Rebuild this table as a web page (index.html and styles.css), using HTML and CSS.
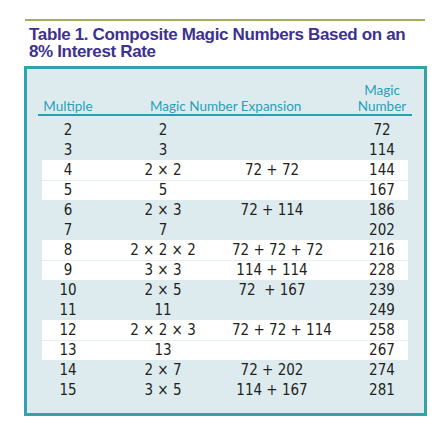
FILE: index.html
```html
<!DOCTYPE html>
<html>
<head>
<meta charset="utf-8">
<link rel="stylesheet" href="styles.css">
</head>
<body>
<div class="rule"></div>
<h1 class="title">Table 1. Composite Magic Numbers Based on an<br>8% Interest Rate</h1>
<div class="box">
  <div class="head">
    <div class="h1c">Multiple</div>
    <div class="h2c">Magic Number Expansion</div>
    <div class="h4c">Magic<br>Number</div>
  </div>
  <div class="rows">
    <div class="row"><span>2</span><span>2</span><span></span><span></span><span>72</span></div>
    <div class="row"><span>3</span><span>3</span><span></span><span></span><span>114</span></div>
    <div class="row w"><span>4</span><span>2 × 2</span><span>72 + 72</span><span></span><span>144</span></div>
    <div class="row w w2"><span>5</span><span>5</span><span></span><span></span><span>167</span></div>
    <div class="row"><span>6</span><span>2 × 3</span><span>72 + 114</span><span></span><span>186</span></div>
    <div class="row"><span>7</span><span>7</span><span></span><span></span><span>202</span></div>
    <div class="row w"><span>8</span><span>2 × 2 × 2</span><span>72 + 72 + 72</span><span></span><span>216</span></div>
    <div class="row w w2"><span>9</span><span>3 × 3</span><span>114 + 114</span><span></span><span>228</span></div>
    <div class="row"><span>10</span><span>2 × 5</span><span>72&nbsp; + 167</span><span></span><span>239</span></div>
    <div class="row"><span>11</span><span>11</span><span></span><span></span><span>249</span></div>
    <div class="row w"><span>12</span><span>2 × 2 × 3</span><span>72 + 72 + 114</span><span></span><span>258</span></div>
    <div class="row w w2"><span>13</span><span>13</span><span></span><span></span><span>267</span></div>
    <div class="row"><span>14</span><span>2 × 7</span><span>72 + 202</span><span></span><span>274</span></div>
    <div class="row"><span>15</span><span>3 × 5</span><span>114 + 167</span><span></span><span>281</span></div>
  </div>
</div>
</body>
</html>
```
FILE: styles.css
```css
html, body { margin: 0; padding: 0; background: #fff; }
body { font-family: "Liberation Sans", Arial, sans-serif; }
.rule { margin: 19px 0 0 25px; width: 400px; height: 2px; background: #a4ab5e; }
.title {
  margin: 5px 0 0 29px;
  font-family: "Liberation Sans", Arial, sans-serif;
  font-weight: bold;
  font-size: 17px;
  letter-spacing: -0.35px;
  line-height: 17px;
  color: #3d3190;
  white-space: nowrap;
}
.box {
  margin: 6px 0 0 24px;
  width: 403px;
  height: 350px;
  box-sizing: border-box;
  border: 3px solid #33a2ab;
  background: #ddebef;
  padding-top: 13px;
}
.head {
  margin: 0 12px 0 11px;
  padding: 0 4px;
  border-bottom: 2px solid #2a9fb1;
  display: grid;
  grid-template-columns: 52px 138px 80px 44px 52px;
  align-items: end;
  font-family: Lato, sans-serif;
  font-size: 13.5px;
  line-height: 16px;
  color: #27a1b8;
}
.h1c { grid-column: 1; text-align: center; white-space: nowrap; }
.h2c { grid-column: 2 / 5; padding-left: 56px; white-space: nowrap; }
.h4c { grid-column: 5; text-align: center; white-space: nowrap; }
.rows { margin: 4px 16px 0 15px; }
.row {
  display: grid;
  grid-template-columns: 52px 138px 80px 44px 52px;
  height: 20px;
  line-height: 20px;
  font-family: "DejaVu Sans Condensed", "DejaVu Sans", sans-serif;
  font-size: 15px;
  color: #231f20;
}
.row span { text-align: center; white-space: nowrap; }
.w { background: #fff; }
.w2 { box-shadow: inset 0 1px 0 #e6eef1; }
```
